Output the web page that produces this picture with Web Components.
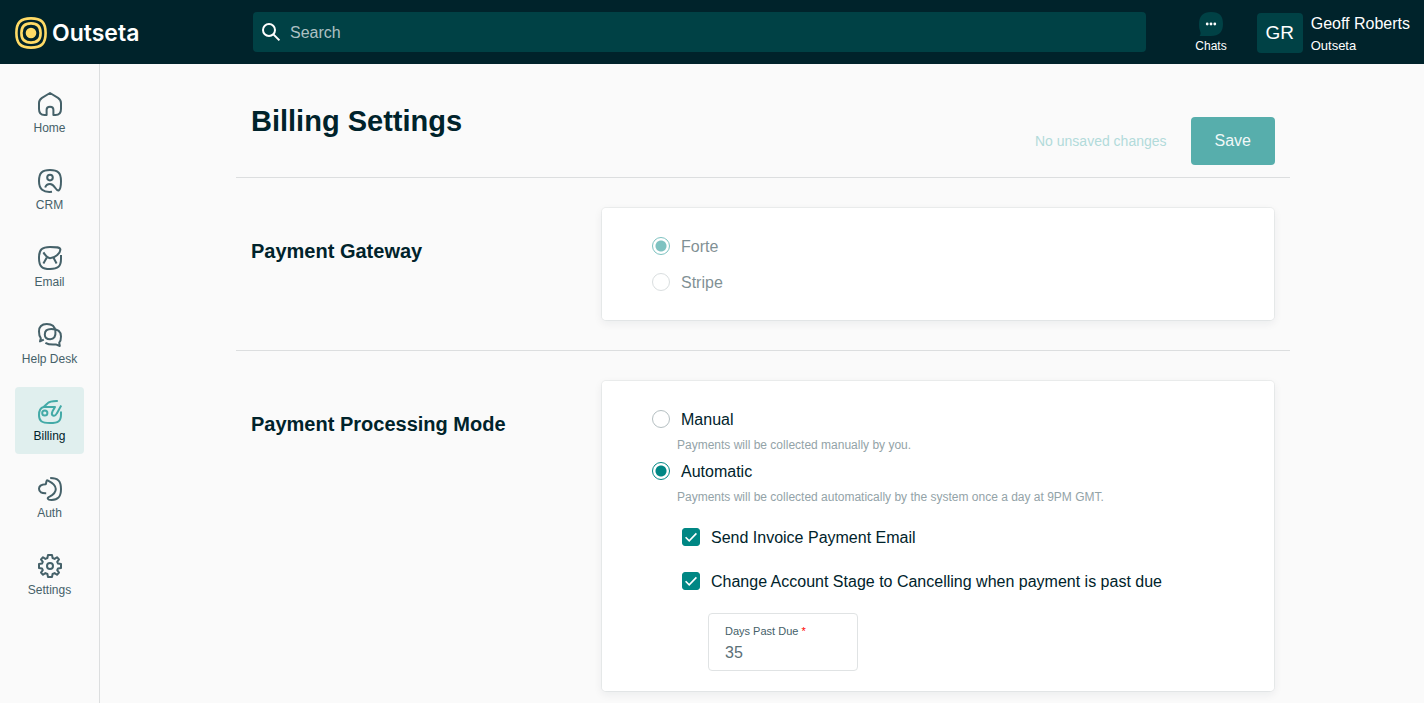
<!DOCTYPE html>
<html lang="en">
<head>
<meta charset="utf-8">
<meta name="viewport" content="width=device-width, initial-scale=1">
<title>Billing Settings - Outseta</title>
<style>
    :root {
        --dark: #00232b;
        --field: #004145;
        --teal: #008784;
        --muted: #456169;
        --help: #93a3a8;
        --line: #dcdedf;
    }
    * { box-sizing: border-box; }
    body {
        margin: 0;
        background: #fafafa;
        color: var(--dark);
        font-family: "Liberation Sans", Arial, sans-serif;
        font-size: 16px;
    }
</style>
</head>
<body>

<os-app>
    <os-topbar slot="top" user="Geoff Roberts" initials="GR" company="Outseta"></os-topbar>

    <os-sidebar slot="side">
        <os-nav-item icon="home">Home</os-nav-item>
        <os-nav-item icon="crm">CRM</os-nav-item>
        <os-nav-item icon="email">Email</os-nav-item>
        <os-nav-item icon="help">Help Desk</os-nav-item>
        <os-nav-item icon="billing" active>Billing</os-nav-item>
        <os-nav-item icon="auth">Auth</os-nav-item>
        <os-nav-item icon="settings">Settings</os-nav-item>
    </os-sidebar>

    <os-page-header>
        Billing Settings
        <span slot="status">No unsaved changes</span>
        <os-save-button slot="action">Save</os-save-button>
    </os-page-header>

    <os-section>
        <span slot="title">Payment Gateway</span>
        <os-radio-group label="Payment Gateway">
            <os-choice type="radio" checked disabled>Forte</os-choice>
            <os-choice type="radio" disabled>Stripe</os-choice>
        </os-radio-group>
    </os-section>

    <os-section>
        <span slot="title">Payment Processing Mode</span>
        <os-radio-group label="Payment Processing Mode">
            <os-choice type="radio">Manual<span slot="help">Payments will be collected manually by you.</span></os-choice>
            <os-choice type="radio" checked>Automatic<span slot="help">Payments will be collected automatically by the system once a day at 9PM GMT.</span></os-choice>
        </os-radio-group>
        <os-options>
            <os-choice type="checkbox" checked>Send Invoice Payment Email</os-choice>
            <os-choice type="checkbox" checked>Change Account Stage to Cancelling when payment is past due</os-choice>
            <os-text-field value="35" required>Days Past Due</os-text-field>
        </os-options>
    </os-section>
</os-app>

<script>
const icones = {
    home: '<path d="M12 1 L20 5.8 Q23 7.8 23 11 V17 C23 21.5 21 23 17.5 23 H15.4 V17.8 C15.4 13.6 8.6 13.6 8.6 17.8 V23 H6.5 C3 23 1 21.5 1 17 V11 Q1 7.8 4 5.8 Z"/>',
    crm: '<circle cx="12" cy="8.6" r="2.8"/><path d="M14 22.8 C5 23.8 1 20 1 12 C1 4 4 1 12 1 C20 1 23 4 23 12 C23 17 22.5 20.2 20.8 21.3 C17.8 22.8 17 15 12 15 C9.2 15 7.8 16.4 7.2 18.6"/>',
    email: '<path d="M23 9 V13 C23 20.5 20 23 12 23 C4 23 1 20.5 1 12 C1 3.5 4 1 12 1 C18 1 22.4 1 22.4 3.8 C22.4 6.4 17.5 12.2 12 12.2 C9.5 12.2 7.8 10.2 5.4 6.4"/><path d="M5.4 17.4 L8.8 11.4 M18.6 17.4 L15.4 11.6"/>',
    help: '<path d="M5.8 16.6 L2 18.4 L2.8 15.2 C1.4 13.6 1 11.4 1 8.5 C1 3 3.5 1 8.8 1 C14.6 1 17 3.2 17.4 8.4 C18 13.4 16 16.2 12.2 16.2 C8.8 16.2 6.8 14.4 6.8 11.4 C6.8 8.2 9 6 13.4 6 C20 6 23 8.2 23 13.4 C23 16.4 22.5 18.2 21.2 19.6 L21.8 23 L17.8 21.4 C13.5 21.8 10.2 21.4 7.4 19.8"/>',
    billing: '<circle cx="6.8" cy="13" r="2.6"/><path d="M19.8 1 C13 .8 11 1.8 9.4 3.4 L5.6 7 C2.5 7.8 1 10.4 1 15 C1 21 3.5 23 12 23 C20.5 23 23 21 23 14.6 V11.4 M5.6 7 H17 L14.4 11.6 C12.6 15.6 16.6 17.6 18.8 13.4 L23.2 5.6"/>',
    auth: '<path d="M12.2 1 C20.2 1 23 4.2 23 12 C23 20 20 23 13.6 23 C9 23 8.8 20.8 11.6 19.6 C15.6 17.6 17.8 14.6 17.8 12 C17.8 8.6 12.8 5 9.6 3.4 C8.2 3 8.4 5.6 7.8 7.2 C3.4 7.4 1 8.6 1 11.8 C1 15.2 3.8 16.4 8.2 16.2"/>',
    settings: '<circle cx="12" cy="12" r="3"/><path d="M10 1 H14 L14.6 4 L16.6 4.9 L19 3.2 L21 5.4 L19.2 7.8 L20 9.6 L23 10.1 V13.9 L20 14.4 L19.2 16.2 L21 18.6 L19 20.8 L16.6 19.1 L14.6 20 L14 23 H10 L9.4 20 L7.4 19.1 L5 20.8 L3 18.6 L4.8 16.2 L4 14.4 L1 13.9 V10.1 L4 9.6 L4.8 7.8 L3 5.4 L5 3.2 L7.4 4.9 L9.4 4 Z"/>'
};

// shared base: clones the template markup into an open shadow root
class OsElement extends HTMLElement {
    constructor() {
        super();
        this.attachShadow({ mode: 'open' });
    }
    render(html) {
        const template = document.createElement('template');
        template.innerHTML = '<style>* { box-sizing: border-box; }</style>' + html;
        this.shadowRoot.replaceChildren(template.content.cloneNode(true));
    }
}

class OsApp extends OsElement {
    connectedCallback() {
        this.render(`
            <style>
                :host { display: flex; flex-direction: column; height: 100vh; }
                .body { display: flex; flex: 1; min-height: 0; }
                main { flex: 1; min-width: 0; overflow-y: auto; scrollbar-width: none; padding-left: 2px; }
                .content { max-width: 1054px; margin: 0 auto; }
            </style>
            <slot name="top"></slot>
            <div class="body">
                <slot name="side"></slot>
                <main><div class="content"><slot></slot></div></main>
            </div>
        `);
    }
}

class OsTopbar extends OsElement {
    connectedCallback() {
        this.render(`
            <style>
                :host { display: block; background: var(--dark); color: #fff; }
                header { display: flex; align-items: flex-start; height: 64px; padding: 12px 14px 0 15px; }
                .logo { display: flex; align-items: center; gap: 5px; width: 238px; padding-top: 5px; color: #fff; text-decoration: none; font: 600 23px/32px Inter, sans-serif; }
                .search { flex: 1; display: flex; align-items: center; gap: 9px; height: 40px; padding: 0 8px; border-radius: 4px; background: var(--field); }
                .search input { flex: 1; min-width: 0; border: 0; outline: 0; padding: 2px 0 0; background: none; color: #fff; font: inherit; }
                .search input::placeholder { color: #adc0c3; opacity: 1; }
                .search label { display: flex; }
                button { border: 0; padding: 0; background: none; color: inherit; font: inherit; cursor: pointer; }
                .chats { display: flex; flex-direction: column; align-items: center; gap: 2px; margin: 0 30px 0 49px; font-size: 12px; line-height: 16px; }
                .user { display: flex; align-items: flex-start; gap: 8px; padding-top: 1px; text-align: left; }
                .initials { width: 46px; border-radius: 4px; background: var(--field); font-size: 19px; line-height: 40px; text-align: center; }
                .name, .company { display: block; line-height: 22px; white-space: nowrap; }
                .company { font-size: 13px; }
            </style>
            <header>
                <a class="logo" href="#">
                    <svg width="32" height="32" viewBox="0 0 32 32" fill="none" stroke="#ffdb66" stroke-width="2.6">
                        <path d="M16 1.4 C26.5 1.4 30.6 5.5 30.6 16 C30.6 26.5 26.5 30.6 16 30.6 C5.5 30.6 1.4 26.5 1.4 16 C1.4 5.5 5.5 1.4 16 1.4 Z"/>
                        <path d="M16 6.4 C22.6 6.4 25.6 9.4 25.6 16 C25.6 22.6 22.6 25.6 16 25.6 C9.4 25.6 6.4 22.6 6.4 16 C6.4 9.4 9.4 6.4 16 6.4 Z"/>
                        <circle cx="16" cy="16" r="5.3" fill="#ffdb66" stroke="none"/>
                    </svg>
                    Outseta
                </a>
                <div class="search">
                    <label for="q" aria-label="Search">
                        <svg width="20" height="20" viewBox="0 0 20 20" fill="none" stroke="#fff" stroke-width="2"><circle cx="8" cy="8" r="6"/><path d="M12.4 12.4 L18.4 18.4"/></svg>
                    </label>
                    <input id="q" type="text" placeholder="Search">
                </div>
                <button class="chats">
                    <svg width="24" height="24" viewBox="0 0 24 24"><path d="M12 0 C21 0 24 4 24 12 C24 20 20 24 12 24 H.5 C1.8 22.5 1.8 21 1.2 19.2 C.3 17 0 15 0 12 C0 4 4 0 12 0 Z" fill="#004145"/><g fill="#fff"><circle cx="8.2" cy="12" r="1.4"/><circle cx="12" cy="12" r="1.4"/><circle cx="15.8" cy="12" r="1.4"/></g></svg>
                    <span>Chats</span>
                </button>
                <button class="user">
                    <span class="initials">${this.getAttribute('initials')}</span>
                    <span><span class="name">${this.getAttribute('user')}</span><span class="company">${this.getAttribute('company')}</span></span>
                </button>
            </header>
        `);
    }
}

class OsSidebar extends OsElement {
    connectedCallback() {
        this.render(`
            <style>
                :host { display: block; flex: none; width: 100px; border-right: 1px solid var(--line); }
                nav { display: flex; flex-direction: column; gap: 10px; padding: 15px; }
            </style>
            <nav><slot></slot></nav>
        `);
    }
}

class OsNavItem extends OsElement {
    connectedCallback() {
        this.render(`
            <style>
                :host { display: block; color: var(--muted); }
                a { display: flex; flex-direction: column; align-items: center; gap: 4px; padding: 13px 0 10px; border-radius: 4px; color: inherit; text-decoration: none; font-size: 12px; line-height: 16px; white-space: nowrap; }
                svg { overflow: visible; }
                :host([active]) a { background: #e0efee; color: var(--dark); }
                :host([active]) svg { color: #43aaa7; }
            </style>
            <a href="#">
                <svg width="24" height="24" viewBox="0 0 24 24" fill="none" stroke="currentColor" stroke-width="2" stroke-linejoin="round">${icones[this.getAttribute('icon')]}</svg>
                <span><slot></slot></span>
            </a>
        `);
    }
}

class OsPageHeader extends OsElement {
    connectedCallback() {
        this.render(`
            <style>
                :host { display: block; border-bottom: 1px solid var(--line); }
                .row { display: flex; align-items: flex-end; gap: 24px; padding: 37px 15px 12px; }
                h1 { flex: 1; align-self: flex-start; margin: 0; font-size: 29px; line-height: 40px; }
                .status { color: #b2dbda; font-size: 14px; line-height: 48px; }
            </style>
            <div class="row">
                <h1><slot></slot></h1>
                <span class="status"><slot name="status"></slot></span>
                <slot name="action"></slot>
            </div>
        `);
    }
}

class OsSaveButton extends OsElement {
    connectedCallback() {
        this.render(`
            <style>
                :host { display: block; padding-top: 16px; }
                button { display: block; height: 48px; padding: 0 24px; border: 0; border-radius: 4px; background: #57aeac; color: #f1f8f8; font: inherit; }
            </style>
            <button type="button" disabled><slot></slot></button>
        `);
    }
}

class OsSection extends OsElement {
    connectedCallback() {
        this.render(`
            <style>
                :host { display: block; border-bottom: 1px solid var(--line); }
                section { display: grid; grid-template-columns: 350px minmax(0, 1fr); align-items: start; padding: 29px 15px; }
                h2 { margin: 0; padding-top: 32px; font-size: 20px; line-height: 24px; }
                .card { padding: 20px 50px; border: 1px solid rgba(0, 35, 43, .05); border-radius: 5px; background: #fff; background-clip: padding-box; box-shadow: 0 3px 9px rgba(0, 35, 43, .06); }
            </style>
            <section>
                <h2><slot name="title"></slot></h2>
                <div class="card"><slot></slot></div>
            </section>
        `);
    }
}

class OsRadioGroup extends OsElement {
    connectedCallback() {
        this.render(`
            <style>
                :host { display: block; }
            </style>
            <slot></slot>
        `);
        this.setAttribute('role', 'radiogroup');
        this.setAttribute('aria-label', this.getAttribute('label'));
        // the inputs live in separate shadow roots, so uncheck the others by hand
        this.addEventListener('choice', function(e) {
            this.querySelectorAll('os-choice').forEach(function(item) {
                item.input.checked = item === e.target;
            });
        });
    }
}

class OsOptions extends OsElement {
    connectedCallback() {
        this.render(`
            <style>
                :host { display: block; padding: 10px 0 0 30px; --row: 44px; }
            </style>
            <slot></slot>
        `);
    }
}

class OsChoice extends OsElement {
    connectedCallback() {
        this.render(`
            <style>
                :host { display: block; }
                .row { display: flex; align-items: center; gap: 11px; min-height: var(--row, 36px); }
                :host([disabled]) .row { opacity: .5; }
                label { padding-top: 2px; line-height: 18px; }
                input { flex: none; appearance: none; display: grid; place-items: center; width: 18px; height: 18px; margin: 0; border: 1px solid #b5bfc2; background: #fff; }
                input[type=radio] { border-radius: 50%; }
                input[type=radio]:checked { border-color: var(--teal); background: radial-gradient(circle, var(--teal) 5px, #fff 6px); }
                input[type=checkbox] { border-radius: 3px; }
                input[type=checkbox]:checked { border-color: var(--teal); background: var(--teal); }
                .box { display: grid; flex: none; }
                .box > * { grid-area: 1 / 1; }
                .box svg { pointer-events: none; visibility: hidden; }
                input[type=checkbox]:checked + svg { visibility: visible; }
                .help { padding-left: 25px; color: var(--help); font-size: 12px; line-height: 16px; }
            </style>
            <div class="row">
                <span class="box">
                    <input id="c" type="${this.getAttribute('type')}">
                    <svg width="18" height="18" viewBox="0 0 18 18" fill="none" stroke="#fff" stroke-width="1.6"><path d="M3.6 9.2 L7.2 12.8 L14.4 5.4"/></svg>
                </span>
                <label for="c"><slot></slot></label>
            </div>
            ${this.querySelector('[slot=help]') ? '<div class="help"><slot name="help"></slot></div>' : ''}
        `);
        this.input = this.shadowRoot.querySelector('input');
        this.input.checked = this.hasAttribute('checked');
        this.input.disabled = this.hasAttribute('disabled');
        this.input.addEventListener('change', () => {
            this.dispatchEvent(new CustomEvent('choice', { bubbles: true }));
        });
    }
}

class OsTextField extends OsElement {
    connectedCallback() {
        this.render(`
            <style>
                :host { display: block; margin: 10px 0 0 26px; }
                .field { width: 150px; padding: 9px 16px 5px; border: 1px solid #e0e3e4; border-radius: 4px; background: #fff; color: var(--muted); }
                label { display: block; font-size: 11px; line-height: 17px; }
                i { color: #f00; font-style: normal; }
                input { display: block; width: 100%; height: 25px; padding: 1px 0 0; border: 0; outline: 0; background: none; color: #5b7077; font: inherit; font-size: 16px; }
            </style>
            <div class="field">
                <label for="f"><slot></slot> ${this.hasAttribute('required') ? '<i>*</i>' : ''}</label>
                <input id="f" type="text" value="${this.getAttribute('value')}">
            </div>
        `);
    }
}

window.customElements.define('os-app', OsApp);
window.customElements.define('os-topbar', OsTopbar);
window.customElements.define('os-sidebar', OsSidebar);
window.customElements.define('os-nav-item', OsNavItem);
window.customElements.define('os-page-header', OsPageHeader);
window.customElements.define('os-save-button', OsSaveButton);
window.customElements.define('os-section', OsSection);
window.customElements.define('os-radio-group', OsRadioGroup);
window.customElements.define('os-options', OsOptions);
window.customElements.define('os-choice', OsChoice);
window.customElements.define('os-text-field', OsTextField);
</script>
</body>
</html>
